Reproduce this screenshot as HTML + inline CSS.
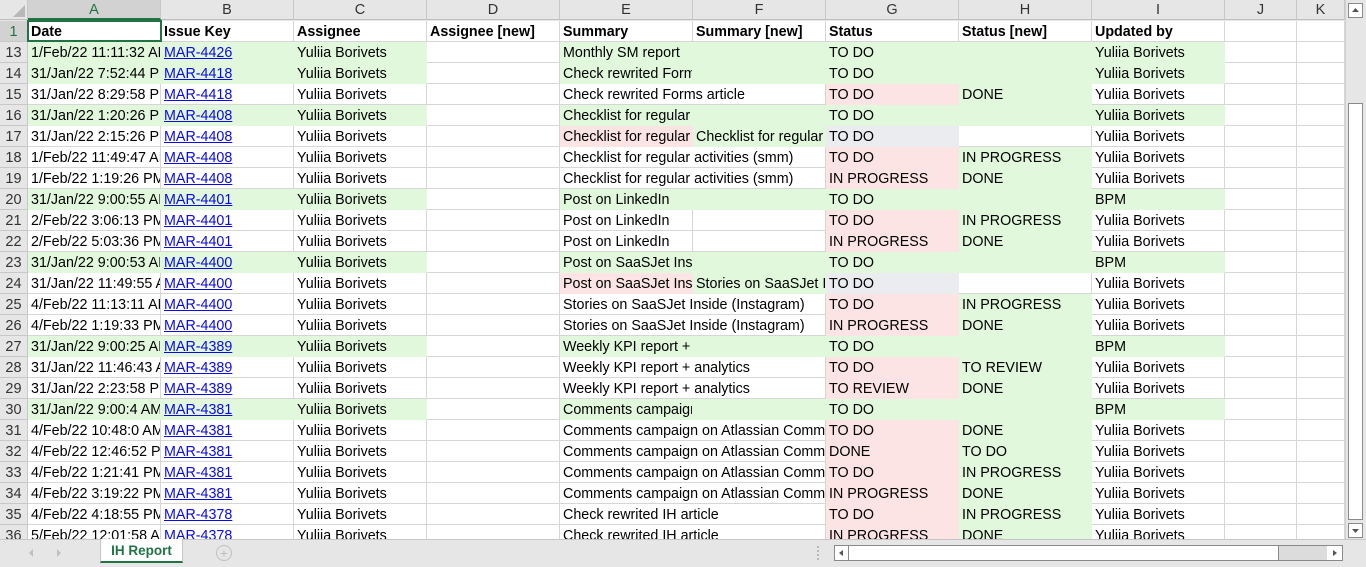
<!DOCTYPE html>
<html><head><meta charset="utf-8"><style>
body{margin:0;width:1366px;height:567px;overflow:hidden;background:#fff;font-family:"Liberation Sans",sans-serif;font-size:14.3px;color:#000;position:relative}
.r{position:absolute;left:0;width:1345px;height:21px}
.r>i{font-style:normal;position:absolute;top:0;height:21px;box-sizing:border-box;border-right:1px solid #d6d6d6;border-bottom:1px solid #d6d6d6;padding-left:3px;line-height:22px;white-space:nowrap;overflow:hidden}
.r>i.n{left:0;width:28px;background:#e6e6e6;border-color:#c8c8c8;text-align:center;padding:0;color:#333;font-size:14.5px}
.a{left:28px;width:133px}.b{left:161px;width:133px}.c{left:294px;width:133px}.d{left:427px;width:133px}
.e{left:560px;width:133px}.e2{left:560px;width:266px}.f{left:693px;width:133px}.g{left:826px;width:133px}
.h{left:959px;width:133px}.i{left:1092px;width:133px}.j{left:1225px;width:72px}.k{left:1297px;width:48px}
.r>i.G{background:#e1f8dc;border-color:#e1f8dc}
.r>i.P{background:#fde4e4;border-color:#fde4e4}
.r>i.Y{background:#ebecef;border-color:#ebecef}
u{color:#0a0ae6}
.hd{position:absolute;top:0;left:0;width:1345px;height:21px;background:#e6e6e6}
.hd span{position:absolute;top:0;height:20px;line-height:21px;text-align:center;border-right:1px solid #c8c8c8;border-bottom:1px solid #bdbdbd;color:#333;font-size:14.5px;box-sizing:border-box}
b{font-weight:bold}
</style></head><body>
<div class="hd">
<span style="left:0;width:28px;background:#e6e6e6"><svg width="28" height="20" style="position:absolute;left:0;top:0"><polygon points="13,17 25,17 25,5" fill="#b8b8b8"/></svg></span>
<span style="left:28px;width:133px;background:#d2d2d2;color:#217346;border-bottom:2px solid #217346">A</span>
<span style="left:161px;width:133px">B</span><span style="left:294px;width:133px">C</span><span style="left:427px;width:133px">D</span>
<span style="left:560px;width:133px">E</span><span style="left:693px;width:133px">F</span><span style="left:826px;width:133px">G</span>
<span style="left:959px;width:133px">H</span><span style="left:1092px;width:133px">I</span><span style="left:1225px;width:72px">J</span><span style="left:1297px;width:48px">K</span>
</div>

<div class="r" style="top:21px"><i class="n" style="background:#d2d2d2;color:#217346">1</i><i class="a"><b>Date</b></i><i class="b"><b>Issue Key</b></i><i class="c"><b>Assignee</b></i><i class="d"><b>Assignee [new]</b></i><i class="e"><b>Summary</b></i><i class="f"><b>Summary [new]</b></i><i class="g"><b>Status</b></i><i class="h"><b>Status [new]</b></i><i class="i"><b>Updated by</b></i><i class="j"></i><i class="k"></i></div>
<div style="position:absolute;left:27px;top:20px;width:135px;height:22px;box-sizing:border-box;border:2px solid #217346"></div>

<div class="r" style="top:42px"><i class="n">13</i><i class="a G">1/Feb/22 11:11:32 AM</i><i class="b G"><u>MAR-4426</u></i><i class="c G">Yuliia Borivets</i><i class="d"></i><i class="e G">Monthly SM report</i><i class="f G"></i><i class="g G">TO DO</i><i class="h G"></i><i class="i G">Yuliia Borivets</i><i class="j"></i><i class="k"></i></div>
<div class="r" style="top:63px"><i class="n">14</i><i class="a G">31/Jan/22 7:52:44 PM</i><i class="b G"><u>MAR-4418</u></i><i class="c G">Yuliia Borivets</i><i class="d"></i><i class="e G">Check rewrited Forms article</i><i class="f G"></i><i class="g G">TO DO</i><i class="h G"></i><i class="i G">Yuliia Borivets</i><i class="j"></i><i class="k"></i></div>
<div class="r" style="top:84px"><i class="n">15</i><i class="a">31/Jan/22 8:29:58 PM</i><i class="b"><u>MAR-4418</u></i><i class="c">Yuliia Borivets</i><i class="d"></i><i class="e2">Check rewrited Forms article</i><i class="g P">TO DO</i><i class="h G">DONE</i><i class="i">Yuliia Borivets</i><i class="j"></i><i class="k"></i></div>
<div class="r" style="top:105px"><i class="n">16</i><i class="a G">31/Jan/22 1:20:26 PM</i><i class="b G"><u>MAR-4408</u></i><i class="c G">Yuliia Borivets</i><i class="d"></i><i class="e G">Checklist for regular activities (smm)</i><i class="f G"></i><i class="g G">TO DO</i><i class="h G"></i><i class="i G">Yuliia Borivets</i><i class="j"></i><i class="k"></i></div>
<div class="r" style="top:126px"><i class="n">17</i><i class="a">31/Jan/22 2:15:26 PM</i><i class="b"><u>MAR-4408</u></i><i class="c">Yuliia Borivets</i><i class="d"></i><i class="e P">Checklist for regular activities (smm)</i><i class="f G">Checklist for regular activities (smm)</i><i class="g Y">TO DO</i><i class="h"></i><i class="i">Yuliia Borivets</i><i class="j"></i><i class="k"></i></div>
<div class="r" style="top:147px"><i class="n">18</i><i class="a">1/Feb/22 11:49:47 AM</i><i class="b"><u>MAR-4408</u></i><i class="c">Yuliia Borivets</i><i class="d"></i><i class="e2">Checklist for regular activities (smm)</i><i class="g P">TO DO</i><i class="h G">IN PROGRESS</i><i class="i">Yuliia Borivets</i><i class="j"></i><i class="k"></i></div>
<div class="r" style="top:168px"><i class="n">19</i><i class="a">1/Feb/22 1:19:26 PM</i><i class="b"><u>MAR-4408</u></i><i class="c">Yuliia Borivets</i><i class="d"></i><i class="e2">Checklist for regular activities (smm)</i><i class="g P">IN PROGRESS</i><i class="h G">DONE</i><i class="i">Yuliia Borivets</i><i class="j"></i><i class="k"></i></div>
<div class="r" style="top:189px"><i class="n">20</i><i class="a G">31/Jan/22 9:00:55 AM</i><i class="b G"><u>MAR-4401</u></i><i class="c G">Yuliia Borivets</i><i class="d"></i><i class="e G">Post on LinkedIn</i><i class="f G"></i><i class="g G">TO DO</i><i class="h G"></i><i class="i G">BPM</i><i class="j"></i><i class="k"></i></div>
<div class="r" style="top:210px"><i class="n">21</i><i class="a">2/Feb/22 3:06:13 PM</i><i class="b"><u>MAR-4401</u></i><i class="c">Yuliia Borivets</i><i class="d"></i><i class="e">Post on LinkedIn</i><i class="f"></i><i class="g P">TO DO</i><i class="h G">IN PROGRESS</i><i class="i">Yuliia Borivets</i><i class="j"></i><i class="k"></i></div>
<div class="r" style="top:231px"><i class="n">22</i><i class="a">2/Feb/22 5:03:36 PM</i><i class="b"><u>MAR-4401</u></i><i class="c">Yuliia Borivets</i><i class="d"></i><i class="e">Post on LinkedIn</i><i class="f"></i><i class="g P">IN PROGRESS</i><i class="h G">DONE</i><i class="i">Yuliia Borivets</i><i class="j"></i><i class="k"></i></div>
<div class="r" style="top:252px"><i class="n">23</i><i class="a G">31/Jan/22 9:00:53 AM</i><i class="b G"><u>MAR-4400</u></i><i class="c G">Yuliia Borivets</i><i class="d"></i><i class="e G">Post on SaaSJet Inside (Instagram)</i><i class="f G"></i><i class="g G">TO DO</i><i class="h G"></i><i class="i G">BPM</i><i class="j"></i><i class="k"></i></div>
<div class="r" style="top:273px"><i class="n">24</i><i class="a">31/Jan/22 11:49:55 AM</i><i class="b"><u>MAR-4400</u></i><i class="c">Yuliia Borivets</i><i class="d"></i><i class="e P">Post on SaaSJet Inside (Instagram)</i><i class="f G">Stories on SaaSJet Inside (Instagram)</i><i class="g Y">TO DO</i><i class="h"></i><i class="i">Yuliia Borivets</i><i class="j"></i><i class="k"></i></div>
<div class="r" style="top:294px"><i class="n">25</i><i class="a">4/Feb/22 11:13:11 AM</i><i class="b"><u>MAR-4400</u></i><i class="c">Yuliia Borivets</i><i class="d"></i><i class="e2">Stories on SaaSJet Inside (Instagram)</i><i class="g P">TO DO</i><i class="h G">IN PROGRESS</i><i class="i">Yuliia Borivets</i><i class="j"></i><i class="k"></i></div>
<div class="r" style="top:315px"><i class="n">26</i><i class="a">4/Feb/22 1:19:33 PM</i><i class="b"><u>MAR-4400</u></i><i class="c">Yuliia Borivets</i><i class="d"></i><i class="e2">Stories on SaaSJet Inside (Instagram)</i><i class="g P">IN PROGRESS</i><i class="h G">DONE</i><i class="i">Yuliia Borivets</i><i class="j"></i><i class="k"></i></div>
<div class="r" style="top:336px"><i class="n">27</i><i class="a G">31/Jan/22 9:00:25 AM</i><i class="b G"><u>MAR-4389</u></i><i class="c G">Yuliia Borivets</i><i class="d"></i><i class="e G">Weekly KPI report + analytics</i><i class="f G"></i><i class="g G">TO DO</i><i class="h G"></i><i class="i G">BPM</i><i class="j"></i><i class="k"></i></div>
<div class="r" style="top:357px"><i class="n">28</i><i class="a">31/Jan/22 11:46:43 AM</i><i class="b"><u>MAR-4389</u></i><i class="c">Yuliia Borivets</i><i class="d"></i><i class="e2">Weekly KPI report + analytics</i><i class="g P">TO DO</i><i class="h G">TO REVIEW</i><i class="i">Yuliia Borivets</i><i class="j"></i><i class="k"></i></div>
<div class="r" style="top:378px"><i class="n">29</i><i class="a">31/Jan/22 2:23:58 PM</i><i class="b"><u>MAR-4389</u></i><i class="c">Yuliia Borivets</i><i class="d"></i><i class="e2">Weekly KPI report + analytics</i><i class="g P">TO REVIEW</i><i class="h G">DONE</i><i class="i">Yuliia Borivets</i><i class="j"></i><i class="k"></i></div>
<div class="r" style="top:399px"><i class="n">30</i><i class="a G">31/Jan/22 9:00:4 AM</i><i class="b G"><u>MAR-4381</u></i><i class="c G">Yuliia Borivets</i><i class="d"></i><i class="e G">Comments campaign on Atlassian Community</i><i class="f G"></i><i class="g G">TO DO</i><i class="h G"></i><i class="i G">BPM</i><i class="j"></i><i class="k"></i></div>
<div class="r" style="top:420px"><i class="n">31</i><i class="a">4/Feb/22 10:48:0 AM</i><i class="b"><u>MAR-4381</u></i><i class="c">Yuliia Borivets</i><i class="d"></i><i class="e2">Comments campaign on Atlassian Community</i><i class="g P">TO DO</i><i class="h G">DONE</i><i class="i">Yuliia Borivets</i><i class="j"></i><i class="k"></i></div>
<div class="r" style="top:441px"><i class="n">32</i><i class="a">4/Feb/22 12:46:52 PM</i><i class="b"><u>MAR-4381</u></i><i class="c">Yuliia Borivets</i><i class="d"></i><i class="e2">Comments campaign on Atlassian Community</i><i class="g P">DONE</i><i class="h G">TO DO</i><i class="i">Yuliia Borivets</i><i class="j"></i><i class="k"></i></div>
<div class="r" style="top:462px"><i class="n">33</i><i class="a">4/Feb/22 1:21:41 PM</i><i class="b"><u>MAR-4381</u></i><i class="c">Yuliia Borivets</i><i class="d"></i><i class="e2">Comments campaign on Atlassian Community</i><i class="g P">TO DO</i><i class="h G">IN PROGRESS</i><i class="i">Yuliia Borivets</i><i class="j"></i><i class="k"></i></div>
<div class="r" style="top:483px"><i class="n">34</i><i class="a">4/Feb/22 3:19:22 PM</i><i class="b"><u>MAR-4381</u></i><i class="c">Yuliia Borivets</i><i class="d"></i><i class="e2">Comments campaign on Atlassian Community</i><i class="g P">IN PROGRESS</i><i class="h G">DONE</i><i class="i">Yuliia Borivets</i><i class="j"></i><i class="k"></i></div>
<div class="r" style="top:504px"><i class="n">35</i><i class="a">4/Feb/22 4:18:55 PM</i><i class="b"><u>MAR-4378</u></i><i class="c">Yuliia Borivets</i><i class="d"></i><i class="e2">Check rewrited IH article</i><i class="g P">TO DO</i><i class="h G">IN PROGRESS</i><i class="i">Yuliia Borivets</i><i class="j"></i><i class="k"></i></div>
<div class="r" style="top:525px"><i class="n">36</i><i class="a">5/Feb/22 12:01:58 AM</i><i class="b"><u>MAR-4378</u></i><i class="c">Yuliia Borivets</i><i class="d"></i><i class="e2">Check rewrited IH article</i><i class="g P">IN PROGRESS</i><i class="h G">DONE</i><i class="i">Yuliia Borivets</i><i class="j"></i><i class="k"></i></div>

<div style="position:absolute;left:1345px;top:0;width:21px;height:540px;background:#e6e6e6;border-left:1px solid #d0d0d0;box-sizing:border-box"></div>
<div style="position:absolute;left:1348px;top:3px;width:15px;height:15px;background:#fff;border:1px solid #8a8a8a;box-sizing:border-box"><svg width="13" height="13"><polygon points="3,8 10,8 6.5,4" fill="#555"/></svg></div>
<div style="position:absolute;left:1348px;top:103px;width:15px;height:417px;background:#fff;border:1px solid #8a8a8a;box-sizing:border-box"></div>
<div style="position:absolute;left:1348px;top:523px;width:15px;height:15px;background:#fff;border:1px solid #8a8a8a;box-sizing:border-box"><svg width="13" height="13"><polygon points="3,5 10,5 6.5,9" fill="#555"/></svg></div>

<div style="position:absolute;left:0;top:539px;width:1366px;height:28px;background:#e6e6e6;border-top:1px solid #c6c6c6;box-sizing:border-box"></div>
<svg style="position:absolute;left:24px;top:546px" width="50" height="14"><polygon points="9,3 9,11 5,7" fill="#c0c0c0"/><polygon points="33,3 33,11 37,7" fill="#c0c0c0"/></svg>
<div style="position:absolute;left:100px;top:539px;width:83px;height:24px;background:#fff;border-left:1px solid #c6c6c6;border-right:1px solid #c6c6c6;border-bottom:2px solid #217346;box-sizing:border-box;text-align:center;line-height:23px;color:#217346;font-weight:bold;font-size:13.5px">IH Report</div>
<div style="position:absolute;left:216px;top:545px;width:14px;height:14px;border:1px solid #c0c0c0;border-radius:50%;color:#c0c0c0;font-size:14px;line-height:14px;text-align:center">+</div>
<div style="position:absolute;left:817px;top:546px;width:2px;height:14px;background:repeating-linear-gradient(#b8b8b8 0 2px,transparent 2px 4px)"></div>
<div style="position:absolute;left:834px;top:545px;width:509px;height:16px;background:#fff;border:1px solid #8a8a8a;box-sizing:border-box"></div>
<div style="position:absolute;left:848px;top:545px;width:431px;height:16px;background:#fff;border:1px solid #8a8a8a;box-sizing:border-box"></div>
<div style="position:absolute;left:1279px;top:546px;width:48px;height:14px;background:#dcdcdc"></div>
<svg style="position:absolute;left:836px;top:547px" width="12" height="12"><polygon points="7,3 7,9 3,6" fill="#555"/></svg>
<svg style="position:absolute;left:1329px;top:547px" width="12" height="12"><polygon points="4,3 4,9 8,6" fill="#555"/></svg>
</body></html>
